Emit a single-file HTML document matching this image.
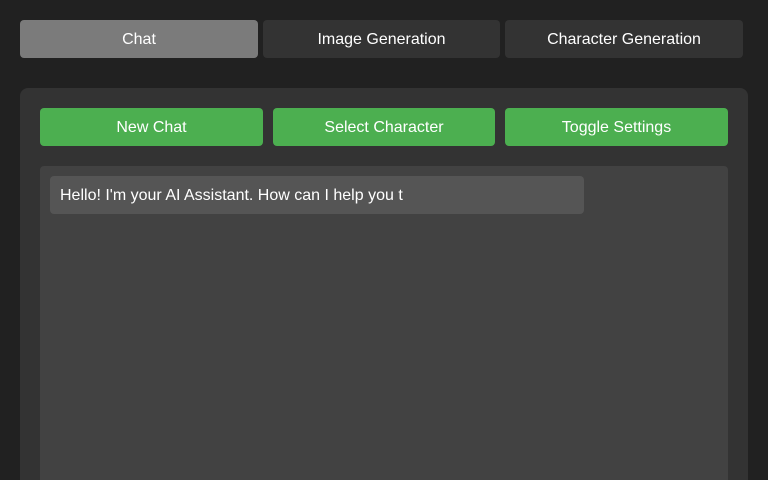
<!DOCTYPE html>
<html><head><style>
html,body{margin:0;height:480px;overflow:hidden}
body{background:#212121;width:768px;font-family:"Liberation Sans",sans-serif;color:#fff;position:relative}
.a{position:absolute;box-sizing:border-box;display:flex;align-items:center;justify-content:center;font-size:16px;border-radius:4px;padding-top:1px}
</style></head><body>
<div class="a" style="left:20px;top:20px;width:238px;height:38px;background:#7b7b7b">Chat</div>
<div class="a" style="left:263px;top:20px;width:237px;height:38px;background:#333">Image Generation</div>
<div class="a" style="left:505px;top:20px;width:238px;height:38px;background:#333">Character Generation</div>
<div class="a" style="left:20px;top:88px;width:728px;height:392px;background:#333;border-radius:8px 8px 0 0"></div>
<div class="a" style="left:40px;top:108px;width:223px;height:38px;background:#4caf50">New Chat</div>
<div class="a" style="left:273px;top:108px;width:222px;height:38px;background:#4caf50">Select Character</div>
<div class="a" style="left:505px;top:108px;width:223px;height:38px;background:#4caf50">Toggle Settings</div>
<div class="a" style="left:40px;top:166px;width:688px;height:314px;background:#424242;border-radius:4px 4px 0 0"></div>
<div class="a" style="left:50px;top:176px;width:534px;height:38px;background:#555;justify-content:flex-start;padding-left:10px">Hello! I'm your AI Assistant. How can I help you t</div>
</body></html>
